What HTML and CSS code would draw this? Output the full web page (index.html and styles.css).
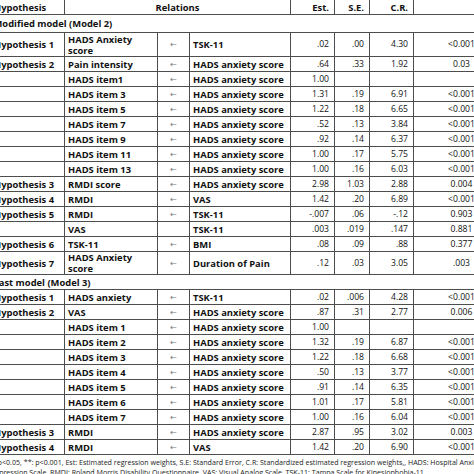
FILE: index.html
```html
<!DOCTYPE html>
<html>
<head>
<meta charset="utf-8">
<link rel="stylesheet" href="styles.css">
</head>
<body>
<div class="page">
<table class="sem">
<colgroup>
<col class="c-hyp"><col class="c-from"><col class="c-arrow"><col class="c-to"><col class="c-est"><col class="c-se"><col class="c-cr"><col class="c-p">
</colgroup>
<thead>
<tr class="head">
<th class="lbl">Hypothesis</th>
<th colspan="3" class="center">Relations</th>
<th class="num">Est.</th>
<th class="num">S.E.</th>
<th class="num">C.R.</th>
<th class="pv"></th>
</tr>
</thead>
<tbody>
<tr class="title first"><td colspan="8">Modified model (Model 2)</td></tr>
<tr class="tall"><td class="lbl">Hypothesis 1</td><td class="lbl">HADS Anxiety score</td><td class="arr">←</td><td class="lbl">TSK-11</td><td class="num">.02</td><td class="num">.00</td><td class="num">4.30</td><td class="pv">&lt;0.001</td></tr>
<tr><td class="lbl">Hypothesis 2</td><td class="lbl">Pain intensity</td><td class="arr">←</td><td class="lbl">HADS anxiety score</td><td class="num">.64</td><td class="num">.33</td><td class="num">1.92</td><td class="pv">0.03</td></tr>
<tr><td></td><td class="lbl">HADS item1</td><td class="arr">←</td><td class="lbl">HADS anxiety score</td><td class="num">1.00</td><td></td><td></td><td></td></tr>
<tr><td></td><td class="lbl">HADS item 3</td><td class="arr">←</td><td class="lbl">HADS anxiety score</td><td class="num">1.31</td><td class="num">.19</td><td class="num">6.91</td><td class="pv">&lt;0.001</td></tr>
<tr><td></td><td class="lbl">HADS item 5</td><td class="arr">←</td><td class="lbl">HADS anxiety score</td><td class="num">1.22</td><td class="num">.18</td><td class="num">6.65</td><td class="pv">&lt;0.001</td></tr>
<tr><td></td><td class="lbl">HADS item 7</td><td class="arr">←</td><td class="lbl">HADS anxiety score</td><td class="num">.52</td><td class="num">.13</td><td class="num">3.84</td><td class="pv">&lt;0.001</td></tr>
<tr><td></td><td class="lbl">HADS item 9</td><td class="arr">←</td><td class="lbl">HADS anxiety score</td><td class="num">.92</td><td class="num">.14</td><td class="num">6.37</td><td class="pv">&lt;0.001</td></tr>
<tr><td></td><td class="lbl">HADS item 11</td><td class="arr">←</td><td class="lbl">HADS anxiety score</td><td class="num">1.00</td><td class="num">.17</td><td class="num">5.75</td><td class="pv">&lt;0.001</td></tr>
<tr><td></td><td class="lbl">HADS item 13</td><td class="arr">←</td><td class="lbl">HADS anxiety score</td><td class="num">1.00</td><td class="num">.16</td><td class="num">6.03</td><td class="pv">&lt;0.001</td></tr>
<tr><td class="lbl">Hypothesis 3</td><td class="lbl">RMDI score</td><td class="arr">←</td><td class="lbl">HADS anxiety score</td><td class="num">2.98</td><td class="num">1.03</td><td class="num">2.88</td><td class="pv">0.004</td></tr>
<tr><td class="lbl">Hypothesis 4</td><td class="lbl">RMDI</td><td class="arr">←</td><td class="lbl">VAS</td><td class="num">1.42</td><td class="num">.20</td><td class="num">6.89</td><td class="pv">&lt;0.001</td></tr>
<tr><td class="lbl">Hypothesis 5</td><td class="lbl">RMDI</td><td class="arr">←</td><td class="lbl">TSK-11</td><td class="num">-.007</td><td class="num">.06</td><td class="num">-.12</td><td class="pv">0.903</td></tr>
<tr><td></td><td class="lbl">VAS</td><td class="arr"></td><td class="lbl">TSK-11</td><td class="num">.003</td><td class="num">.019</td><td class="num">.147</td><td class="pv">0.881</td></tr>
<tr><td class="lbl">Hypothesis 6</td><td class="lbl">TSK-11</td><td class="arr">←</td><td class="lbl">BMI</td><td class="num">.08</td><td class="num">.09</td><td class="num">.88</td><td class="pv">0.377</td></tr>
<tr class="tall2"><td class="lbl">Hypothesis 7</td><td class="lbl">HADS Anxiety score</td><td class="arr">←</td><td class="lbl">Duration of Pain</td><td class="num">.12</td><td class="num">.03</td><td class="num">3.05</td><td class="pv">.003</td></tr>
<tr class="title"><td colspan="8">Last model (Model 3)</td></tr>
<tr><td class="lbl">Hypothesis 1</td><td class="lbl">HADS anxiety</td><td class="arr">←</td><td class="lbl">TSK-11</td><td class="num">.02</td><td class="num">.006</td><td class="num">4.28</td><td class="pv">&lt;0.001</td></tr>
<tr><td class="lbl">Hypothesis 2</td><td class="lbl">VAS</td><td class="arr">←</td><td class="lbl">HADS anxiety score</td><td class="num">.87</td><td class="num">.31</td><td class="num">2.77</td><td class="pv">0.006</td></tr>
<tr><td></td><td class="lbl">HADS item 1</td><td class="arr">←</td><td class="lbl">HADS anxiety score</td><td class="num">1.00</td><td></td><td></td><td></td></tr>
<tr><td></td><td class="lbl">HADS item 2</td><td class="arr">←</td><td class="lbl">HADS anxiety score</td><td class="num">1.32</td><td class="num">.19</td><td class="num">6.87</td><td class="pv">&lt;0.001</td></tr>
<tr><td></td><td class="lbl">HADS item 3</td><td class="arr">←</td><td class="lbl">HADS anxiety score</td><td class="num">1.22</td><td class="num">.18</td><td class="num">6.68</td><td class="pv">&lt;0.001</td></tr>
<tr><td></td><td class="lbl">HADS item 4</td><td class="arr">←</td><td class="lbl">HADS anxiety score</td><td class="num">.50</td><td class="num">.13</td><td class="num">3.77</td><td class="pv">&lt;0.001</td></tr>
<tr><td></td><td class="lbl">HADS item 5</td><td class="arr">←</td><td class="lbl">HADS anxiety score</td><td class="num">.91</td><td class="num">.14</td><td class="num">6.35</td><td class="pv">&lt;0.001</td></tr>
<tr><td></td><td class="lbl">HADS item 6</td><td class="arr">←</td><td class="lbl">HADS anxiety score</td><td class="num">1.01</td><td class="num">.17</td><td class="num">5.81</td><td class="pv">&lt;0.001</td></tr>
<tr><td></td><td class="lbl">HADS item 7</td><td class="arr">←</td><td class="lbl">HADS anxiety score</td><td class="num">1.00</td><td class="num">.16</td><td class="num">6.04</td><td class="pv">&lt;0.001</td></tr>
<tr><td class="lbl">Hypothesis 3</td><td class="lbl">RMDI</td><td class="arr">←</td><td class="lbl">HADS anxiety score</td><td class="num">2.87</td><td class="num">.95</td><td class="num">3.02</td><td class="pv">0.003</td></tr>
<tr><td class="lbl">Hypothesis 4</td><td class="lbl">RMDI</td><td class="arr">←</td><td class="lbl">VAS</td><td class="num">1.42</td><td class="num">.20</td><td class="num">6.90</td><td class="pv">&lt;0.001</td></tr>
</tbody>
</table>
<div class="note">
<div class="note-line">*: p&lt;0.05, **: p&lt;0.001, Est: Estimated regression weights, S.E: Standard Error, C.R: Standardized estimated regression weights,, HADS: Hospital Anxiety and</div>
<div class="note-line">Depression Scale, RMDI: Roland Morris Disability Questionnaire, VAS: Visual Analog Scale, TSK-11: Tampa Scale for Kinesiophobia-11.</div>
</div>
</div>
</body>
</html>
```

FILE: styles.css
```css
html, body {
  margin: 0;
  padding: 0;
  background: #ffffff;
}
body {
  width: 474px;
  height: 474px;
  overflow: hidden;
  font-family: "Open Sans", "Noto Sans", sans-serif;
  color: #111;
}
.page {
  margin-left: -10px;
  width: 520px;
}
.sem {
  border-collapse: collapse;
  table-layout: fixed;
  width: 519px;
}
.c-hyp { width: 74px; }
.c-from { width: 93px; }
.c-arrow { width: 32px; }
.c-to { width: 101px; }
.c-est { width: 44px; }
.c-se { width: 35px; }
.c-cr { width: 44px; }
.c-p { width: 96px; }

.sem th, .sem td {
  border: 1px solid #4d4d4d;
  padding: 0 3px;
  height: 14px;
  line-height: 11px;
  vertical-align: middle;
  white-space: normal;
  overflow: hidden;
}
.sem thead th {
  border-top: none;
  font-weight: 700;
  font-size: 9.4px;
}
.lbl {
  text-align: left;
  font-weight: 700;
  font-size: 9.4px;
}
.center { text-align: center; }
.num {
  text-align: right;
  font-size: 8.6px;
  padding-right: 5px !important;
}
th.num { font-size: 9.4px; }
.pv {
  text-align: center;
  font-size: 8.6px;
}
.arr {
  text-align: center;
  font-family: "DejaVu Sans", sans-serif;
  font-size: 8px;
  color: #777;
}
.sem tr.title td {
  border-left: none;
  border-right: none;
  font-weight: 700;
  font-size: 9.4px;
  height: 14px;
}
.sem tr.title.first td { height: 17px; }
.sem tr.tall td { height: 23px; }
.sem tr.tall2 td { height: 22px; }
.note {
  margin-top: 3px;
  font-size: 7.1px;
  line-height: 9.5px;
  color: #222;
  white-space: nowrap;
}
```
